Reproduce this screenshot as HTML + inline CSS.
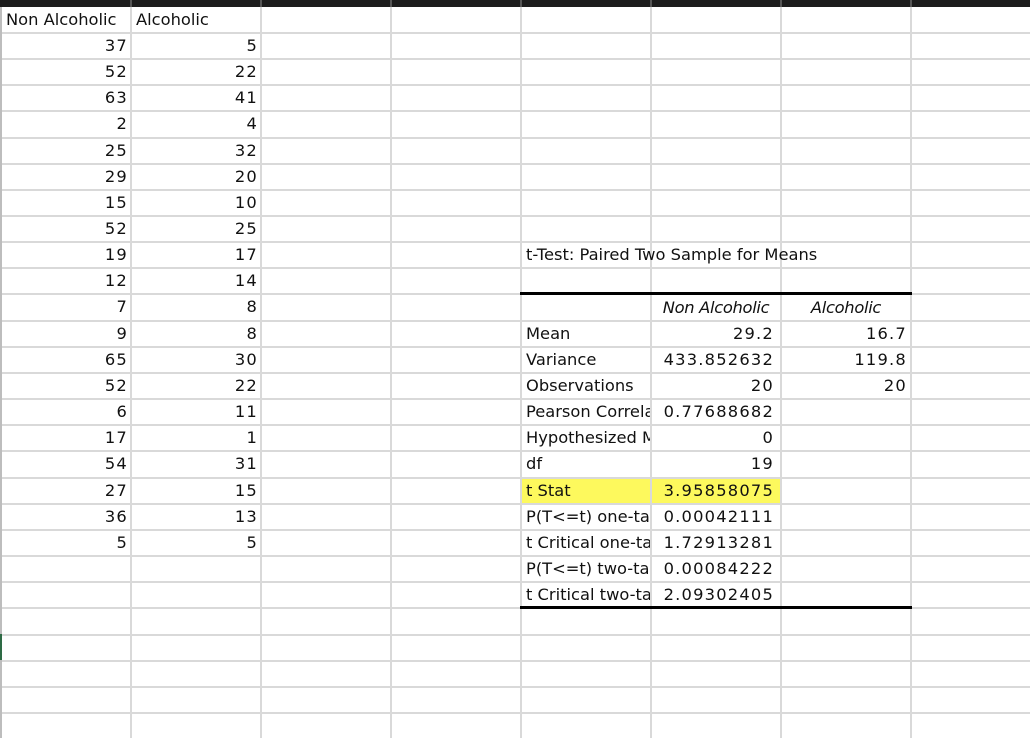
<!DOCTYPE html>
<html><head><meta charset="utf-8"><style>
html,body{margin:0;padding:0;background:#fff;}
body{width:1030px;height:738px;position:relative;overflow:hidden;font-family:"DejaVu Sans","Liberation Sans",sans-serif;font-size:16.3px;color:#111;}
.h{position:absolute;left:0;width:1030px;height:2px;background:#d9d9d9;}
.v{position:absolute;top:0;height:738px;width:2px;background:#d9d9d9;}
.c{position:absolute;height:26px;line-height:27px;white-space:nowrap;overflow:hidden;}
.r{text-align:right;letter-spacing:1.2px;}
.i{font-style:italic;text-align:center;letter-spacing:-0.3px;}
</style></head><body>
<div style="position:absolute;left:521px;top:477px;width:260px;height:26px;background:#fdf95d"></div>
<div class="h" style="top:32px"></div><div class="h" style="top:58px"></div><div class="h" style="top:84px"></div><div class="h" style="top:110px"></div><div class="h" style="top:137px"></div><div class="h" style="top:163px"></div><div class="h" style="top:189px"></div><div class="h" style="top:215px"></div><div class="h" style="top:241px"></div><div class="h" style="top:267px"></div><div class="h" style="top:293px"></div><div class="h" style="top:320px"></div><div class="h" style="top:346px"></div><div class="h" style="top:372px"></div><div class="h" style="top:398px"></div><div class="h" style="top:424px"></div><div class="h" style="top:450px"></div><div class="h" style="top:477px"></div><div class="h" style="top:503px"></div><div class="h" style="top:529px"></div><div class="h" style="top:555px"></div><div class="h" style="top:581px"></div><div class="h" style="top:607px"></div><div class="h" style="top:634px"></div><div class="h" style="top:660px"></div><div class="h" style="top:686px"></div><div class="h" style="top:712px"></div>
<div class="v" style="left:130px"></div><div class="v" style="left:260px"></div><div class="v" style="left:390px"></div><div class="v" style="left:520px"></div><div class="v" style="left:650px"></div><div class="v" style="left:780px"></div><div class="v" style="left:910px"></div>
<div style="position:absolute;left:0;top:0;width:2px;height:738px;background:#bdbdbd"></div>
<div style="position:absolute;left:0;top:634px;width:2px;height:26px;background:#2e6b45"></div>
<div style="position:absolute;left:0;top:0;width:1030px;height:7px;background:#1c1c1c"></div>
<div style="position:absolute;left:130px;top:0;width:2px;height:7px;background:#555"></div>
<div style="position:absolute;left:260px;top:0;width:2px;height:7px;background:#555"></div>
<div style="position:absolute;left:390px;top:0;width:2px;height:7px;background:#555"></div>
<div style="position:absolute;left:520px;top:0;width:2px;height:7px;background:#555"></div>
<div style="position:absolute;left:650px;top:0;width:2px;height:7px;background:#555"></div>
<div style="position:absolute;left:780px;top:0;width:2px;height:7px;background:#555"></div>
<div style="position:absolute;left:910px;top:0;width:2px;height:7px;background:#555"></div>
<div style="position:absolute;left:520px;top:292px;width:392px;height:3px;background:#000"></div>
<div style="position:absolute;left:520px;top:606px;width:392px;height:3px;background:#000"></div>

<div class="c" style="left:6px;top:6px;width:124px">Non Alcoholic</div>
<div class="c" style="left:136px;top:6px;width:124px">Alcoholic</div>

<div class="c r" style="left:2px;width:126px;top:32px">37</div><div class="c r" style="left:132px;width:126px;top:32px">5</div>
<div class="c r" style="left:2px;width:126px;top:58px">52</div><div class="c r" style="left:132px;width:126px;top:58px">22</div>
<div class="c r" style="left:2px;width:126px;top:84px">63</div><div class="c r" style="left:132px;width:126px;top:84px">41</div>
<div class="c r" style="left:2px;width:126px;top:110px">2</div><div class="c r" style="left:132px;width:126px;top:110px">4</div>
<div class="c r" style="left:2px;width:126px;top:137px">25</div><div class="c r" style="left:132px;width:126px;top:137px">32</div>
<div class="c r" style="left:2px;width:126px;top:163px">29</div><div class="c r" style="left:132px;width:126px;top:163px">20</div>
<div class="c r" style="left:2px;width:126px;top:189px">15</div><div class="c r" style="left:132px;width:126px;top:189px">10</div>
<div class="c r" style="left:2px;width:126px;top:215px">52</div><div class="c r" style="left:132px;width:126px;top:215px">25</div>
<div class="c r" style="left:2px;width:126px;top:241px">19</div><div class="c r" style="left:132px;width:126px;top:241px">17</div>
<div class="c r" style="left:2px;width:126px;top:267px">12</div><div class="c r" style="left:132px;width:126px;top:267px">14</div>
<div class="c r" style="left:2px;width:126px;top:293px">7</div><div class="c r" style="left:132px;width:126px;top:293px">8</div>
<div class="c r" style="left:2px;width:126px;top:320px">9</div><div class="c r" style="left:132px;width:126px;top:320px">8</div>
<div class="c r" style="left:2px;width:126px;top:346px">65</div><div class="c r" style="left:132px;width:126px;top:346px">30</div>
<div class="c r" style="left:2px;width:126px;top:372px">52</div><div class="c r" style="left:132px;width:126px;top:372px">22</div>
<div class="c r" style="left:2px;width:126px;top:398px">6</div><div class="c r" style="left:132px;width:126px;top:398px">11</div>
<div class="c r" style="left:2px;width:126px;top:424px">17</div><div class="c r" style="left:132px;width:126px;top:424px">1</div>
<div class="c r" style="left:2px;width:126px;top:450px">54</div><div class="c r" style="left:132px;width:126px;top:450px">31</div>
<div class="c r" style="left:2px;width:126px;top:477px">27</div><div class="c r" style="left:132px;width:126px;top:477px">15</div>
<div class="c r" style="left:2px;width:126px;top:503px">36</div><div class="c r" style="left:132px;width:126px;top:503px">13</div>
<div class="c r" style="left:2px;width:126px;top:529px">5</div><div class="c r" style="left:132px;width:126px;top:529px">5</div>

<div class="c" style="left:526px;top:241px;width:400px">t-Test: Paired Two Sample for Means</div>
<div class="c i" style="left:652px;top:294px;width:128px">Non Alcoholic</div>
<div class="c i" style="left:782px;top:294px;width:128px">Alcoholic</div>

<div class="c" style="left:526px;width:124px;top:320px">Mean</div><div class="c r" style="left:652px;width:122px;top:320px">29.2</div><div class="c r" style="left:782px;width:125px;top:320px">16.7</div>
<div class="c" style="left:526px;width:124px;top:346px">Variance</div><div class="c r" style="left:652px;width:122px;top:346px">433.852632</div><div class="c r" style="left:782px;width:125px;top:346px">119.8</div>
<div class="c" style="left:526px;width:124px;top:372px">Observations</div><div class="c r" style="left:652px;width:122px;top:372px">20</div><div class="c r" style="left:782px;width:125px;top:372px">20</div>
<div class="c" style="left:526px;width:124px;top:398px">Pearson Correlation</div><div class="c r" style="left:652px;width:122px;top:398px">0.77688682</div>
<div class="c" style="left:526px;width:124px;top:424px">Hypothesized Mean Difference</div><div class="c r" style="left:652px;width:122px;top:424px">0</div>
<div class="c" style="left:526px;width:124px;top:450px">df</div><div class="c r" style="left:652px;width:122px;top:450px">19</div>
<div class="c" style="left:526px;width:124px;top:477px">t Stat</div><div class="c r" style="left:652px;width:122px;top:477px">3.95858075</div>
<div class="c" style="left:526px;width:124px;top:503px">P(T&lt;=t) one-tail</div><div class="c r" style="left:652px;width:122px;top:503px">0.00042111</div>
<div class="c" style="left:526px;width:124px;top:529px">t Critical one-tail</div><div class="c r" style="left:652px;width:122px;top:529px">1.72913281</div>
<div class="c" style="left:526px;width:124px;top:555px">P(T&lt;=t) two-tail</div><div class="c r" style="left:652px;width:122px;top:555px">0.00084222</div>
<div class="c" style="left:526px;width:124px;top:581px">t Critical two-tail</div><div class="c r" style="left:652px;width:122px;top:581px">2.09302405</div>
</body></html>
